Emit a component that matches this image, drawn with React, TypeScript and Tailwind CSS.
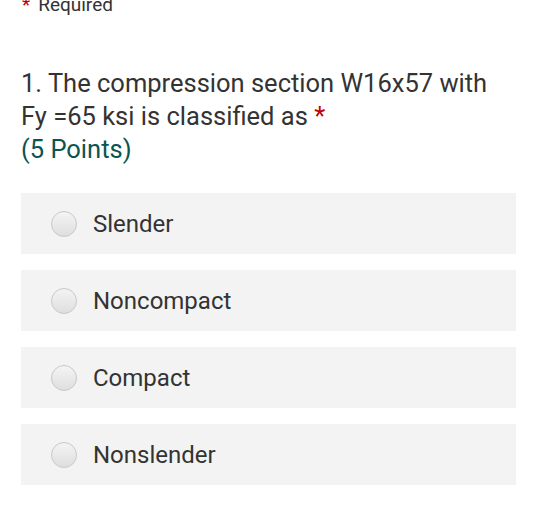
export default function App() {
  const options = ["Slender", "Noncompact", "Compact", "Nonslender"];

  return (
    <div className="w-[538px] h-[514px] overflow-hidden bg-white font-['Roboto',sans-serif]">
      <div className="-mt-[7px] flex items-center gap-[8px] pl-[22px] text-[19px] leading-[24px] text-[#333]">
        <span className="text-[#c00000]">*</span>
        <span>Required</span>
      </div>

      <div className="mt-[50px] px-[21px] text-[25.5px] leading-[33px] text-[#333]">
        <div>
          1. The compression section W16x57 with
          <br />
          Fy =65 ksi is classified as <span className="text-[#c00000]">*</span>
        </div>
        <div className="text-[#0b5550]">(5 Points)</div>
      </div>

      <div className="mt-[27px] flex flex-col gap-[16px] pl-[21px] pr-[22px]">
        {options.map((label) => (
          <div
            key={label}
            className="flex h-[61px] items-center bg-[#f3f3f3] pl-[30px]"
          >
            <span className="h-[26px] w-[26px] rounded-full border border-[#c8c8c8] bg-[linear-gradient(#f4f4f4,#dedede)]" />
            <span className="ml-[16px] text-[24px] text-[#333]">{label}</span>
          </div>
        ))}
      </div>
    </div>
  );
}
